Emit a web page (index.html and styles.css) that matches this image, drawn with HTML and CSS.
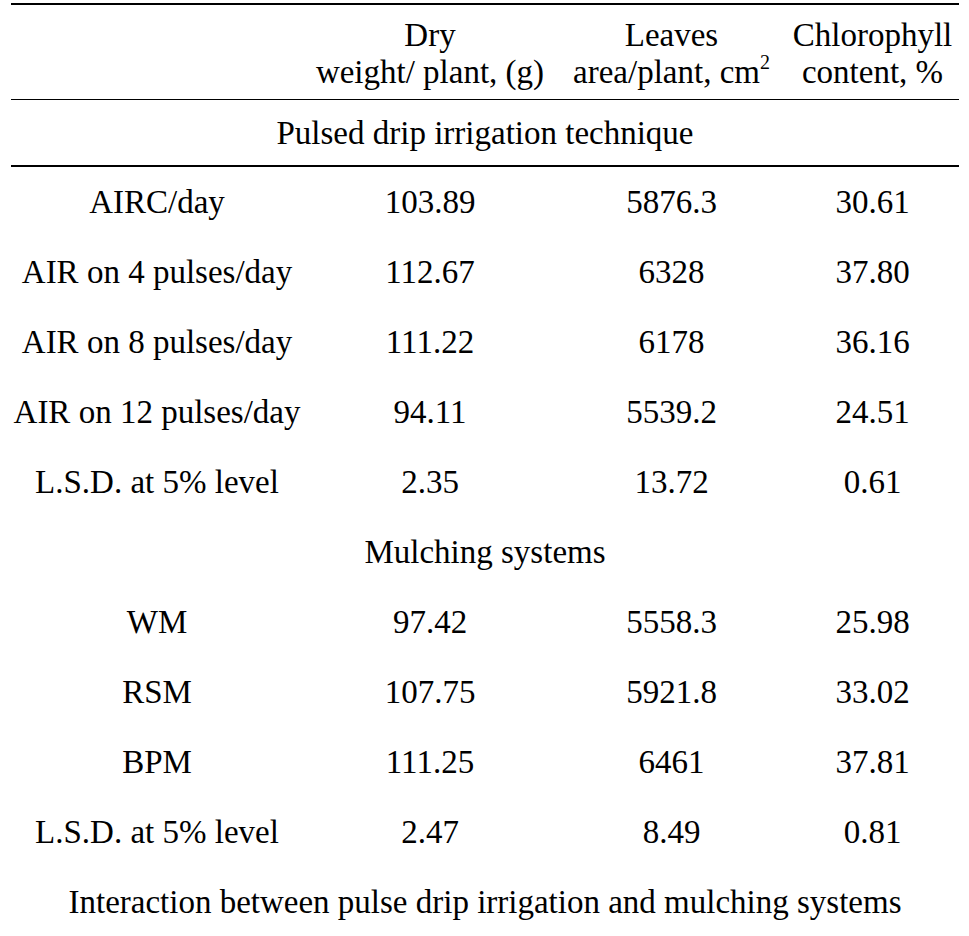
FILE: index.html
```html
<!DOCTYPE html>
<html>
<head>
<meta charset="utf-8">
<link rel="stylesheet" href="styles.css">
</head>
<body>
<table class="data">
  <colgroup>
    <col class="c1"><col class="c2"><col class="c3"><col class="c4">
  </colgroup>
  <thead>
    <tr class="head">
      <th></th>
      <th>Dry<br>weight/ plant, (g)</th>
      <th>Leaves<br>area/plant, cm<sup>2</sup></th>
      <th>Chlorophyll<br>content, %</th>
    </tr>
  </thead>
  <tbody>
    <tr class="section top"><td colspan="4">Pulsed drip irrigation technique</td></tr>
    <tr class="row"><td>AIRC/day</td><td>103.89</td><td>5876.3</td><td>30.61</td></tr>
    <tr class="row"><td>AIR on 4 pulses/day</td><td>112.67</td><td>6328</td><td>37.80</td></tr>
    <tr class="row"><td>AIR on 8 pulses/day</td><td>111.22</td><td>6178</td><td>36.16</td></tr>
    <tr class="row"><td>AIR on 12 pulses/day</td><td>94.11</td><td>5539.2</td><td>24.51</td></tr>
    <tr class="row"><td>L.S.D. at 5% level</td><td>2.35</td><td>13.72</td><td>0.61</td></tr>
    <tr class="row"><td colspan="4">Mulching systems</td></tr>
    <tr class="row"><td>WM</td><td>97.42</td><td>5558.3</td><td>25.98</td></tr>
    <tr class="row"><td>RSM</td><td>107.75</td><td>5921.8</td><td>33.02</td></tr>
    <tr class="row"><td>BPM</td><td>111.25</td><td>6461</td><td>37.81</td></tr>
    <tr class="row"><td>L.S.D. at 5% level</td><td>2.47</td><td>8.49</td><td>0.81</td></tr>
    <tr class="row"><td colspan="4">Interaction between pulse drip irrigation and mulching systems</td></tr>
  </tbody>
</table>
</body>
</html>
```

FILE: styles.css
```css
html, body {
  margin: 0;
  padding: 0;
  background: #fff;
}

body {
  font-family: "Liberation Serif", "Times New Roman", serif;
  font-size: 33px;
  color: #000;
  overflow: hidden;
}

.data {
  margin: 3px 0 0 11px;
  width: 948px;
  table-layout: fixed;
  border-collapse: collapse;
  border-spacing: 0;
  border-top: 2px solid #000;
}

.c1 { width: 292px; }
.c2 { width: 254px; }
.c3 { width: 229px; }
.c4 { width: 173px; }

th, td {
  padding: 0;
  text-align: center;
  vertical-align: middle;
  white-space: nowrap;
  font-weight: normal;
}

.head th {
  line-height: 37px;
  padding-top: 12px;
  padding-bottom: 8px;
  border-bottom: 1px solid #000;
}

.head sup {
  font-size: 20px;
  line-height: 0;
  vertical-align: 14px;
}

.section td {
  height: 65px;
  line-height: 38px;
  border-bottom: 2px solid #000;
}

.row td {
  height: 70px;
  line-height: 38px;
}
```
